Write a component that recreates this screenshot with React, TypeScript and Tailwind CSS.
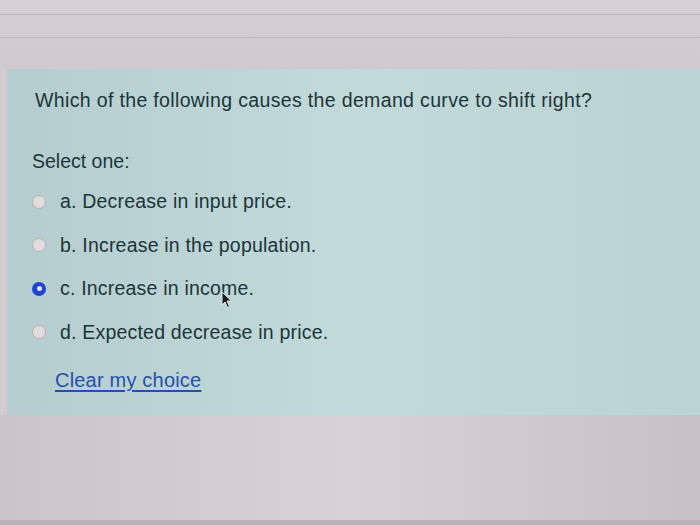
import type { ReactElement } from "react";

const options = [
  { key: "a", label: "a. Decrease in input price." },
  { key: "b", label: "b. Increase in the population." },
  { key: "c", label: "c. Increase in income." },
  { key: "d", label: "d. Expected decrease in price." },
];

function Radio({ checked }: { checked: boolean }): ReactElement {
  if (checked) {
    return (
      <span className="flex h-[14px] w-[14px] shrink-0 items-center justify-center rounded-full bg-[#1f45d2]">
        <span className="h-[5px] w-[5px] rounded-full bg-[#dfe6ee]" />
      </span>
    );
  }
  return (
    <span className="h-[14px] w-[14px] shrink-0 rounded-full border border-[#b7b0b4] bg-[#e2dcdf]" />
  );
}

export default function App(): ReactElement {
  return (
    <div
      className="flex h-[525px] w-[700px] flex-col overflow-hidden bg-[#d3ccd1] text-[#1c3539]"
      style={{ fontFamily: '"Liberation Sans", Arial, sans-serif' }}
    >
      <div className="h-[69px] shrink-0 bg-linear-to-b from-[#d6d0d4] to-[#d0cacf]">
        <div className="h-[15px] border-b border-[#bcb6ba]" />
        <div className="h-[23px] border-b border-[#bfb9bd]" />
      </div>

      <section className="relative ml-[7px] h-[346px] shrink-0 bg-linear-to-r from-[#b6cdcf] via-[#c3dadb] to-[#bcd3d4] pt-[20px]">
        <h1 className="flex h-[24px] items-center pl-[28px] text-[19.5px] tracking-[0.35px]">
          Which of the following causes the demand curve to shift right?
        </h1>

        <p className="mt-[37px] flex h-[24px] items-center pl-[25px] text-[19.5px]">
          Select one:
        </p>

        <div className="mt-[6px] flex flex-col">
          {options.map((o) => (
            <label
              key={o.key}
              className="flex h-[43.5px] items-center gap-[14px] pl-[25px] text-[19.5px] tracking-[0.2px]"
            >
              <Radio checked={o.key === "c"} />
              <span>{o.label}</span>
            </label>
          ))}
        </div>

        <a
          href="#"
          className="ml-[48px] mt-[14px] inline-flex h-[24px] items-center text-[20px] tracking-[0.2px] text-[#2450ad] underline decoration-2 underline-offset-[3px]"
        >
          Clear my choice
        </a>

        <svg
          className="absolute left-[214px] top-[222px]"
          width="12"
          height="18"
          viewBox="0 0 12 18"
        >
          <path
            d="M1 1 L1 14 L4 11 L6.5 16.5 L8.5 15.5 L6 10 L10.5 10 Z"
            fill="#1a1a1a"
            stroke="#e8e8e8"
            strokeWidth="1"
          />
        </svg>
      </section>

      <div className="flex-1 bg-linear-to-r from-[#cbc4c9] via-[#d8d2d6] to-[#c7c0c6]" />
      <div className="h-[5px] shrink-0 bg-[#b8b2b6]" />
    </div>
  );
}
